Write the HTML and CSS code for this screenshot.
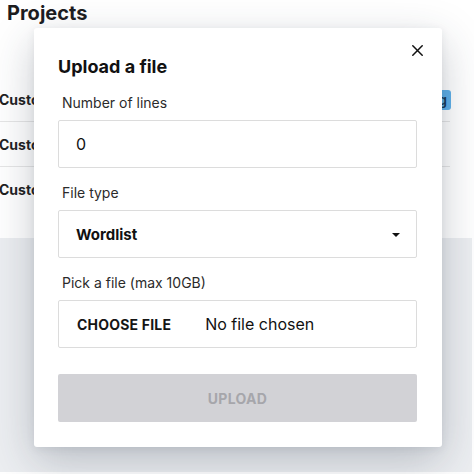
FILE: index.html
```html
<!DOCTYPE html>
<html>
<head>
<meta charset="utf-8">
<link rel="stylesheet" href="styles.css">
</head>
<body>
<div class="page">
  <div class="top">
    <h1 class="heading">Projects</h1>
    <div class="card">
      <div class="thead"></div>
      <div class="row"><span class="name">Custom wordlist</span><span class="tag">Processing</span></div>
      <div class="row"><span class="name">Custom rules</span></div>
      <div class="row last"><span class="name">Custom list</span></div>
    </div>
  </div>
</div>

<div class="modal">
  <button class="close" aria-label="Close">
    <svg width="11" height="11" viewBox="0 0 11 11"><path d="M0.8 0.8L10.2 10.2M10.2 0.8L0.8 10.2" stroke="#111" stroke-width="1.5" fill="none" stroke-linecap="round"/></svg>
  </button>
  <h2 class="modal-title">Upload a file</h2>

  <label class="label">Number of lines</label>
  <div class="field"><span class="value">0</span></div>

  <label class="label">File type</label>
  <div class="field select"><span class="value strong">Wordlist</span><span class="caret"></span></div>

  <label class="label">Pick a file (max 10GB)</label>
  <div class="field file"><span class="choose">Choose file</span><span class="nofile">No file chosen</span></div>

  <button class="upload" disabled>Upload</button>
</div>
</body>
</html>
```

FILE: styles.css
```css
* { box-sizing: border-box; }

html, body {
  margin: 0;
  padding: 0;
  background: #ffffff;
  font-family: Inter, "Noto Sans", "Liberation Sans", sans-serif;
  color: #1a1a1a;
}

.page {
  width: 472px;
  height: 472px;
  background: #eceef1;
  overflow: hidden;
}

.top {
  background: #ffffff;
  height: 238px;
  padding-top: 1px;
}

.heading {
  margin: 0;
  padding-left: 7px;
  font-size: 20px;
  line-height: 24px;
  font-weight: 700;
  color: #1d1d1f;
}

.card {
  margin-left: -17px;
  width: 483px;
  padding: 0 16px;
}

.thead {
  height: 52px;
}

.row {
  display: flex;
  align-items: center;
  justify-content: space-between;
  height: 45px;
  border-bottom: 1px solid #e6e6e6;
}

.row.last {
  border-bottom: none;
}

.name {
  font-size: 14px;
  font-weight: 700;
  color: #1f1f1f;
  width: 35px;
  overflow: hidden;
  white-space: nowrap;
}

.tag {
  background: #5eb0e9;
  color: #163a57;
  font-size: 14px;
  font-weight: 600;
  padding: 2px 4px 3px 6px;
  border-radius: 3px;
  line-height: 15px;
  margin-right: -1px;
  margin-top: 1px;
}

.modal {
  position: absolute;
  left: 34px;
  top: 28px;
  width: 408px;
  height: 419px;
  background: #ffffff;
  border-radius: 3px;
  padding: 26px 25px 25px 24px;
  display: flex;
  flex-direction: column;
  box-shadow: 0 14px 44px rgba(40, 50, 70, 0.26), 0 2px 8px rgba(40, 50, 70, 0.08);
}

.close {
  position: absolute;
  top: 17px;
  right: 19px;
  width: 11px;
  height: 11px;
  padding: 0;
  border: none;
  background: none;
  display: flex;
}

.modal-title {
  margin: 0 0 13px;
  font-size: 18px;
  line-height: 26px;
  font-weight: 700;
  color: #111;
}

.label {
  display: block;
  padding-left: 4px;
  font-size: 14px;
  line-height: 20px;
  color: #2b2b2b;
  margin-bottom: 7px;
}

.field {
  height: 48px;
  border: 1px solid #dcdcdc;
  border-radius: 2px;
  display: flex;
  align-items: center;
  padding-left: 17px;
  margin-bottom: 15px;
  position: relative;
}

.value {
  font-size: 16px;
  color: #111;
}

.value.strong {
  font-size: 15px;
  font-weight: 700;
}

.caret {
  position: absolute;
  right: 16px;
  top: 22px;
  width: 0;
  height: 0;
  border-left: 4px solid transparent;
  border-right: 4px solid transparent;
  border-top: 4px solid #111;
}

.file {
  padding-left: 18px;
  margin-bottom: 26px;
}

.choose {
  font-size: 14px;
  font-weight: 700;
  text-transform: uppercase;
  letter-spacing: 0.2px;
  color: #151515;
  margin-right: 34px;
}

.nofile {
  font-size: 16px;
  color: #111;
}

.upload {
  height: 48px;
  border: none;
  border-radius: 2px;
  background: #d2d2d6;
  color: #a6a6ab;
  font-family: inherit;
  font-size: 14px;
  font-weight: 700;
  text-transform: uppercase;
  letter-spacing: 0.3px;
  padding: 0;
}
```
